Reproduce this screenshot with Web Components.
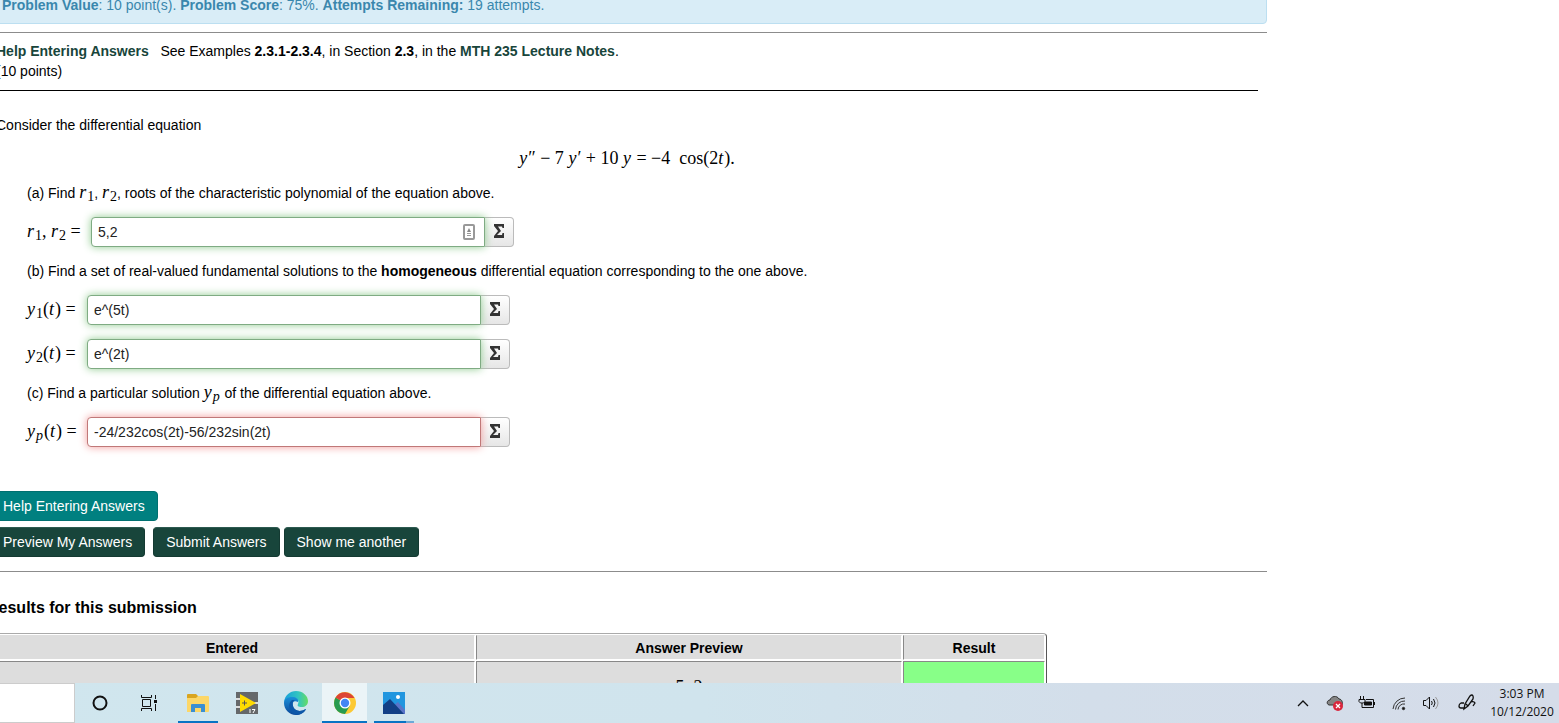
<!DOCTYPE html>
<html lang="en">
<head>
<meta charset="utf-8">
<title>MTH 235 Homework</title>
<style>
   html, body {
      margin: 0;
      height: 100%;
      overflow: hidden;
      background: #fff;
      color: #000;
      font: 14px/20px "Liberation Sans", Arial, sans-serif;
   }
</style>
</head>
<body>

<desktop-screen>
   <problem-page>
      <score-alert slot="alert">
         <b>Problem Value</b>: 10 point(s). <b>Problem Score</b>: 75%. <b>Attempts Remaining:</b> 19 attempts.
      </score-alert>
      <problem-body slot="problem"></problem-body>
      <button-rows slot="buttons"></button-rows>
      <results-table slot="results"></results-table>
   </problem-page>
   <task-bar slot="taskbar"></task-bar>
</desktop-screen>

<script>
/* Small helper so each element only has to list its own markup */
class BaseElement extends HTMLElement {
   constructor() {
      super();
      this.attachShadow({ mode: 'open' }).innerHTML = this.template();
   }
   template() {
      return '<slot></slot>';
   }
}

/* Page on top, task bar at the bottom */
class DesktopScreen extends BaseElement {
   template() {
      return `
         <style>
            :host {
               display: flex;
               flex-direction: column;
               height: 100vh;
            }
            main {
               flex: 1;
               min-height: 0;
               overflow: hidden;
            }
         </style>
         <main><slot></slot></main>
         <slot name="taskbar"></slot>
      `;
   }
}

/* The homework page, scrolled a little down and to the right */
class ProblemPage extends BaseElement {
   template() {
      return `
         <style>
            :host {
               display: block;
               margin: -14px 292px 0 -13px;
            }
            hr {
               margin: 0;
               border: 0;
               border-top: 1px solid #8c8c8c;
            }
            hr.top {
               margin-top: 8px;
            }
            hr.bottom {
               margin-top: 14px;
            }
         </style>
         <slot name="alert"></slot>
         <hr class="top">
         <slot name="problem"></slot>
         <slot name="buttons"></slot>
         <hr class="bottom">
         <slot name="results"></slot>
      `;
   }
}

class ScoreAlert extends BaseElement {
   template() {
      return `
         <style>
            :host {
               display: block;
               padding: 8px 14px;
               border: 1px solid #bcdff1;
               border-radius: 4px;
               background: #d9edf7;
               color: #3a87ad;
            }
         </style>
         <slot></slot>
      `;
   }
}

/* Inline formula in a serif face, no white space around the slot so that commas sit tight */
class MathText extends BaseElement {
   template() {
      return `<style>
            :host {
               font-family: "Liberation Serif", "Times New Roman", serif;
               font-size: 18px;
               line-height: 0;
               white-space: nowrap;
            }
            ::slotted(sub) {
               font-size: 14px;
               line-height: 0;
               vertical-align: -3px;
            }
         </style><slot></slot>`;
   }
}

/* Label, answer box and the equation editor button */
class AnswerField extends BaseElement {
   template() {
      const name = this.getAttribute('name');
      const state = this.getAttribute('state');
      const manager = this.hasAttribute('manager') ? `
         <svg width="12" height="16" viewBox="0 0 12 16" fill="none" stroke="#999">
            <rect x="1" y="1" width="10" height="14" rx="1" stroke-width="2"/>
            <path d="M6 4l2 4H4z" fill="#888" stroke="none"/>
            <path d="M4 9.500h4M4 11.500h4"/>
         </svg>` : '';
      return `
         <style>
            :host {
               display: flex;
               align-items: center;
               height: 30px;
               --glow: #8fcb8f;
               --edge: #7fab83;
            }
            :host([state="incorrect"]) {
               --glow: #f29a9a;
               --edge: #c07878;
            }
            label {
               width: 60px;
            }
            :host([manager]) label {
               width: 64px;
            }
            .box {
               position: relative;
               width: 394px;
            }
            input {
               display: block;
               box-sizing: border-box;
               width: 100%;
               height: 30px;
               padding: 4px 6px;
               border: 1px solid var(--edge);
               border-radius: 4px 0 0 4px;
               outline: 0;
               background: #fff;
               box-shadow: 0 0 8px var(--glow);
               color: #222;
               font: inherit;
            }
            svg {
               position: absolute;
               top: 7px;
               right: 10px;
            }
            button {
               width: 29px;
               height: 30px;
               padding: 0;
               border: 1px solid #bbb;
               border-left: 0;
               border-radius: 0 4px 4px 0;
               background: linear-gradient(#fff, #e6e6e6);
               color: #333;
            }
            button svg {
               position: static;
               display: block;
               margin: auto;
            }
         </style>
         <label for="${name}"><slot></slot></label>
         <div class="box">
            <input id="${name}" name="${name}" type="text" value="${this.getAttribute('value')}" aria-invalid="${state === 'incorrect'}">
            ${manager}
         </div>
         <button type="button" aria-label="Equation editor">
            <svg width="12" height="16" viewBox="0 0 12 16" fill="#333">
               <path d="M1 0h10v4H9.500L9 2.500H5L8 7l-4 4h5l.5-2H11v5H1v-2l4-5-4-5z"/>
            </svg>
         </button>
      `;
   }
}

class ProblemBody extends BaseElement {
   template() {
      return `
         <style>
            :host {
               display: block;
               padding: 8px 9px 0;
            }
            a {
               color: #18453b;
               font-weight: bold;
               text-decoration: none;
            }
            p {
               margin: 0;
            }
            hr {
               margin: 9px 0 24px;
               border: 0;
               border-top: 1px solid #000;
            }
            .equation {
               margin: 14px 0;
               text-align: center;
            }
            .parts {
               display: grid;
               gap: 14px;
               padding-left: 31px;
               margin-bottom: 44px;
            }
            i {
               padding-right: 1px;
            }
         </style>
         <p><a href="#help">Help Entering Answers</a> &nbsp; See Examples <b>2.3.1-2.3.4</b>, in Section <b>2.3</b>, in the <a href="#notes">MTH 235 Lecture Notes</a>.</p>
         <p>(10 points)</p>
         <hr>
         <p>Consider the differential equation</p>
         <p class="equation"><math-text><i>y</i>″ − 7 <i>y</i>′ + 10 <i>y</i> = −4 &nbsp;cos(2<i>t</i>).</math-text></p>
         <div class="parts">
            <p>(a) Find <math-text><i>r</i><sub>1</sub></math-text>, <math-text><i>r</i><sub>2</sub></math-text>, roots of the characteristic polynomial of the equation above.</p>
            <answer-field name="roots" state="correct" value="5,2" manager><math-text><i>r</i><sub>1</sub>, <i>r</i><sub>2</sub> =</math-text></answer-field>
            <p>(b) Find a set of real-valued fundamental solutions to the <b>homogeneous</b> differential equation corresponding to the one above.</p>
            <answer-field name="y1" state="correct" value="e^(5t)"><math-text><i>y</i><sub>1</sub>(<i>t</i>) =</math-text></answer-field>
            <answer-field name="y2" state="correct" value="e^(2t)"><math-text><i>y</i><sub>2</sub>(<i>t</i>) =</math-text></answer-field>
            <p>(c) Find a particular solution <math-text><i>y</i><sub><i>p</i></sub></math-text> of the differential equation above.</p>
            <answer-field name="yp" state="incorrect" value="-24/232cos(2t)-56/232sin(2t)"><math-text><i>y</i><sub><i>p</i></sub>(<i>t</i>) =</math-text></answer-field>
         </div>
      `;
   }
}

class ButtonRows extends BaseElement {
   template() {
      return `
         <style>
            :host {
               display: grid;
               gap: 6px;
               padding-left: 3px;
            }
            div {
               display: flex;
               gap: 4px;
            }
            button {
               height: 30px;
               padding: 0 12px;
               border: 1px solid #143a32;
               border-top-color: #2d5a50;
               border-radius: 4px;
               background: #18453b;
               color: #fff;
               font: inherit;
            }
            button.help {
               border-color: #007070;
               background: #008080;
            }
            button.preview {
               margin-right: 4px;
            }
         </style>
         <div><button type="button" class="help">Help Entering Answers</button></div>
         <div>
            <button type="button" class="preview">Preview My Answers</button>
            <button type="button">Submit Answers</button>
            <button type="button">Show me another</button>
         </div>
      `;
   }
}

class ResultsTable extends BaseElement {
   template() {
      return `
         <style>
            :host {
               display: block;
            }
            h3 {
               margin: 26px 0 15px;
               font-size: 16px;
               line-height: 20px;
            }
            table {
               box-sizing: border-box;
               width: 1060px;
               max-width: 100%;
               table-layout: fixed;
               border: 1px outset #aaa;
               border-radius: 4px;
               border-spacing: 1px;
            }
            col.preview { width: 426px; }
            col.result { width: 142px; }
            th, td {
               border: 1px solid #fff;
               border-top-color: #888;
               border-left-color: #888;
               background: #ddd;
               text-align: center;
            }
            th {
               height: 23px;
               padding: 0;
               border-top-color: #ddd;
            }
            td {
               height: 20px;
               padding: 16px 4px;
            }
            td.correct {
               background: #8f8;
            }
         </style>
         <h3>Results for this submission</h3>
         <table>
            <colgroup><col><col class="preview"><col class="result"></colgroup>
            <tr><th>Entered</th><th>Answer Preview</th><th>Result</th></tr>
            <tr><td></td><td><math-text>5, 2</math-text></td><td class="correct"></td></tr>
         </table>
      `;
   }
}

class TaskBar extends BaseElement {
   template() {
      return `
         <style>
            :host {
               display: flex;
               height: 40px;
               background: linear-gradient(90deg, #d0e6ee, #d0e4ed 45%, #d3deea 70%, #d5dce9);
               color: #111;
            }
            input {
               box-sizing: border-box;
               width: 75px;
               padding: 0;
               border: 1px solid #ccc;
               border-left: 0;
               background: #fff;
            }
            nav, .tray {
               display: flex;
            }
            nav {
               flex: 1;
            }
            button {
               display: flex;
               align-items: center;
               justify-content: center;
               box-sizing: border-box;
               width: 49px;
               height: 40px;
               padding: 0;
               border: 0;
               background: none;
            }
            button.open {
               background: linear-gradient(#0873c4, #0873c4) center bottom / 40px 2px no-repeat;
            }
            button.stacked {
               background-image: linear-gradient(90deg, #0873c4 80%, #6ca9d8 80%);
            }
            button.active {
               background: linear-gradient(#0873c4, #0873c4) center bottom / 45px 2px no-repeat,
                  linear-gradient(#ebf4f7, #ebf4f7) center / 45px 40px no-repeat;
            }
            .tray button {
               width: 32px;
            }
            .tray button.ink {
               width: 40px;
            }
            time {
               width: 72px;
               padding-top: 2px;
               padding-right: 2px;
               box-sizing: border-box;
               font: 12px/18px "Open Sans", "Noto Sans", sans-serif;
               text-align: center;
            }
            time span {
               display: block;
            }
         </style>
         <input type="text" aria-label="Search">
         <nav>
            <button aria-label="Cortana">
               <svg width="18" height="18" viewBox="0 0 18 18"><circle cx="9" cy="9" r="6.500" fill="none" stroke="#111" stroke-width="2"/></svg>
            </button>
            <button aria-label="Task view">
               <svg width="18" height="18" viewBox="0 0 18 18" fill="none" stroke="#111">
                  <path d="M1.500 1v2.500h10V1M1.500 17v-2.500h10V17M2.500 5.500h8v7h-8zM15.500 1v4M15.500 10v7"/>
                  <path d="M14 6h3v3h-3z" fill="#111" stroke="none"/>
               </svg>
            </button>
            <button class="open" aria-label="File Explorer">
               <svg width="22" height="20" viewBox="0 0 22 20">
                  <path d="M0 2q0-1 1-1h8l2 2v4H0z" fill="#d9a520"/>
                  <path d="M0 5h9l2-2h10q1 0 1 1v14q0 1-1 1H0z" fill="#fcd768"/>
                  <path d="M4 19v-7q0-1 1-1h12q1 0 1 1v7h-4v-4H8v4z" fill="#3b8fd2"/>
               </svg>
            </button>
            <button aria-label="LabVIEW">
               <svg width="22" height="22" viewBox="0 0 22 22">
                  <path d="M0 0h22v22H0z" fill="#65686a"/>
                  <path d="M0 7h5M0 15h5M18 11h4" stroke="#ddd" stroke-width="2"/>
                  <path d="M4 2l16 9-16 9z" fill="#ffdc00"/>
                  <path d="M6 11h5M8.500 8.500v5" stroke="#555"/>
                  <path d="M14 17v4M16 17.500h3l-2 3.500" fill="none" stroke="#fff"/>
               </svg>
            </button>
            <button aria-label="Microsoft Edge">
               <svg width="24" height="24" viewBox="0 0 24 24">
                  <defs>
                     <linearGradient id="eg" x1="0" x2="1"><stop stop-color="#189fdc"/><stop offset=".6" stop-color="#32c5c0"/><stop offset="1" stop-color="#67dc62"/></linearGradient>
                     <linearGradient id="eb" x1="0" x2="0" y1="0" y2="1"><stop stop-color="#198fd9"/><stop offset="1" stop-color="#0c4899"/></linearGradient>
                  </defs>
                  <path d="M0 11C1 4 6 0 12 0c7 0 12 5 12 10 0 4-3 6-6 6-4 0-5-1-4-3 2-4-2-6-5-6-4 0-7 2-9 4z" fill="url(#eg)"/>
                  <path d="M0 12c0-4 4-6 8-6 4 0 7 2 6 5-4-2-6 0-5 4 1 4 6 7 13 3-2 4-6 6-10 6C5 24 0 18 0 12z" fill="url(#eb)"/>
                  <path d="M8 9c-4 3-4 10 2 14 5 2 10-1 12-5-7 4-12 1-13-3-1-3 0-5 2-6z" fill="#0d57a8"/>
               </svg>
            </button>
            <button class="active" aria-label="Google Chrome">
               <svg width="22" height="22" viewBox="0 0 22 22">
                  <circle cx="11" cy="11" r="11" fill="#fcc934"/>
                  <path d="M11 11L1.500 5.500A11 11 0 0 0 11 22l5-8.500z" fill="#279b50"/>
                  <path d="M11 11L1.500 5.500a11 11 0 0 1 19 .5H11z" fill="#dc4435"/>
                  <circle cx="11" cy="11" r="5.500" fill="#fff"/>
                  <circle cx="11" cy="11" r="4.200" fill="#4285f4"/>
               </svg>
            </button>
            <button class="open stacked" aria-label="Photos">
               <svg width="22" height="22" viewBox="0 0 22 22">
                  <path d="M0 0h22v22H0z" fill="#2196df"/>
                  <path d="M10 14l5-4 7 8v4H10z" fill="#5974c8"/>
                  <path d="M0 13l7-6 14 15H0z" fill="#123f85"/>
                  <circle cx="15" cy="5" r="2" fill="#fff"/>
               </svg>
            </button>
         </nav>
         <div class="tray">
            <button aria-label="Show hidden icons">
               <svg width="12" height="8" viewBox="0 0 12 8"><path d="M1 7l5-5 5 5" fill="none" stroke="#111" stroke-width="1.300"/></svg>
            </button>
            <button aria-label="Cloud sync error">
               <svg width="18" height="16" viewBox="0 0 18 16">
                  <path d="M3 10C0 9 1 5 4 5c1-4 7-5 9-1 3 0 4 4 3 6z" fill="#858585" stroke="#333"/>
                  <circle cx="12" cy="11" r="5" fill="#d9263d"/>
                  <path d="M10 9l4 4M14 9l-4 4" stroke="#fff" stroke-width="1.300"/>
               </svg>
            </button>
            <button aria-label="Battery">
               <svg width="18" height="16" viewBox="0 0 18 16" fill="none" stroke="#111">
                  <path d="M2.500 1v3M5.500 1v3M1 4.500h6v2L5.500 8h-3L1 6.500zM4 8v4.500h11.500v-8H8M16.500 7v3"/>
                  <path d="M6.500 7h7v3h-7z" fill="#111"/>
               </svg>
            </button>
            <button aria-label="Wi-Fi">
               <svg width="16" height="16" viewBox="0 0 16 16" fill="none" stroke="#333">
                  <path d="M2 14A12 12 0 0 1 14 3M4.500 14.500A9 9 0 0 1 14 6M7 14.500A6 6 0 0 1 14 9"/>
                  <circle cx="12.500" cy="13.500" r="1.200" fill="#111"/>
               </svg>
            </button>
            <button aria-label="Volume">
               <svg width="18" height="16" viewBox="0 0 18 16" fill="none" stroke="#111">
                  <path d="M1.500 5.500H4L7.500 2v12L4 10.500H1.500zM9.500 6q1.500 2 0 4M11.500 4q3 4 0 8"/>
                  <path d="M13.500 2q5 6 0 12" stroke="#999"/>
               </svg>
            </button>
            <button class="ink" aria-label="Windows Ink">
               <svg width="18" height="18" viewBox="0 0 18 18" fill="none" stroke="#111" stroke-width="1.300">
                  <path d="M6 15L7 10l5-8q2-2 3 0 .5 1 0 3l-5 7zM8 10l2 2M6 9H3q-2 1-2 3t2 2h3M13 8q3-1 4 1l-2 3"/>
               </svg>
            </button>
            <time datetime="2020-10-12T15:03"><span>3:03 PM</span><span>10/12/2020</span></time>
         </div>
      `;
   }
}

customElements.define('desktop-screen', DesktopScreen);
customElements.define('problem-page', ProblemPage);
customElements.define('score-alert', ScoreAlert);
customElements.define('math-text', MathText);
customElements.define('answer-field', AnswerField);
customElements.define('problem-body', ProblemBody);
customElements.define('button-rows', ButtonRows);
customElements.define('results-table', ResultsTable);
customElements.define('task-bar', TaskBar);
</script>
</body>
</html>
